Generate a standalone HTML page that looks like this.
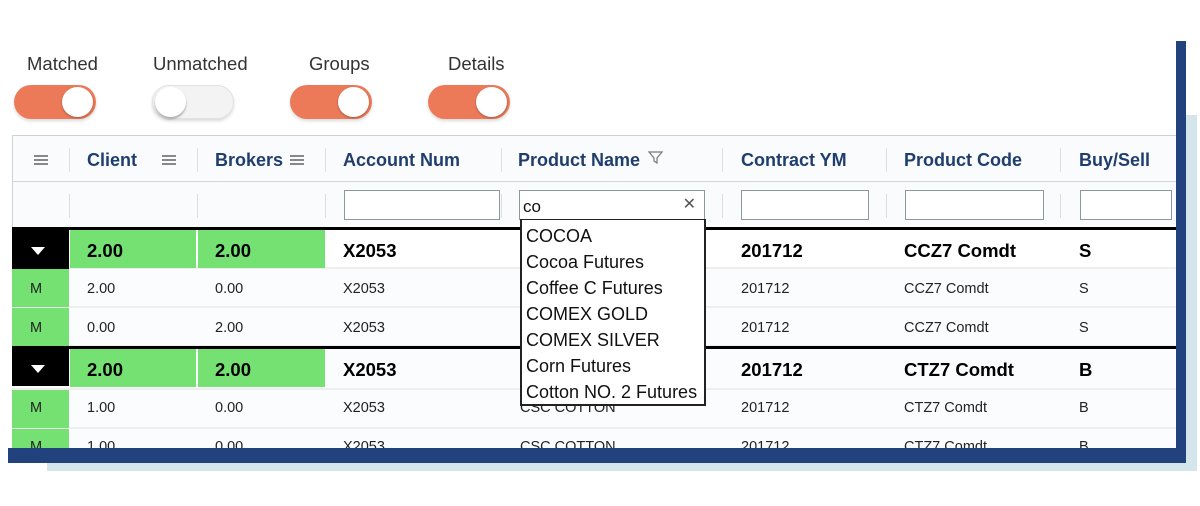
<!DOCTYPE html>
<html><head><meta charset="utf-8"><style>
*{margin:0;padding:0;box-sizing:border-box}
body{width:1200px;height:506px;background:#fff;position:relative;overflow:hidden;font-family:"Liberation Sans",sans-serif}
.a{position:absolute}
.lbl{font-family:"Liberation Sans",sans-serif;font-size:18.5px;color:#333;top:53px}
.tg{top:85px;width:82px;height:34px;border-radius:17px;background:#ec7a58;box-shadow:0 2px 3px rgba(0,0,0,.15)}
.tg .k{position:absolute;right:3px;top:2px;width:31px;height:30px;border-radius:50%;background:#fff;box-shadow:0 1px 2px rgba(0,0,0,.3)}
.tg.off{background:#f3f3f3;border:1px solid #e2e2e2}
.tg.off .k{left:2px;right:auto;top:1px;box-shadow:0 2px 2px rgba(0,0,0,.3)}
.hd{font-size:18px;font-weight:bold;color:#1f3e6e;top:150px}
.sep{width:1px;background:#ddd}
.ham{width:14px;height:10px;border-top:2px solid #888;border-bottom:2px solid #888}
.ham:after{content:"";position:absolute;left:0;right:0;top:2px;border-top:2px solid #888}
.inp{height:30px;top:190px;border:1px solid #8a9a9a;background:#fff}
.row{left:12px;width:1164px;border-bottom:2px solid #eee;background:#fbfcfe}
.c{position:absolute;font-size:14.5px;color:#222}
.b{font-size:18.5px;font-weight:bold;color:#000}
.g{background:#75e173}
.dd div{font-size:18px;color:#111;height:26px;line-height:26px;padding-left:4px}
</style></head><body>
<div class="a" style="left:1186px;top:115px;width:11px;height:356px;background:#d4e5ec"></div>
<div class="a" style="left:47px;top:463px;width:1150px;height:8px;background:#d4e5ec"></div>

<div class="a lbl" style="left:27px">Matched</div>
<div class="a lbl" style="left:153px">Unmatched</div>
<div class="a lbl" style="left:309px">Groups</div>
<div class="a lbl" style="left:448px">Details</div>
<div class="a tg" style="left:14px"><div class="k"></div></div>
<div class="a tg off" style="left:152px"><div class="k"></div></div>
<div class="a tg" style="left:290px"><div class="k"></div></div>
<div class="a tg" style="left:428px"><div class="k"></div></div>

<div class="a" style="left:12px;top:135px;width:1164px;height:315px;border:1px solid #ccd3d6;border-right:none;background:#fafbfc"></div>
<div class="a" style="left:12px;top:181px;width:1164px;height:1px;background:#cfd6d9"></div>
<div class="a ham" style="left:34px;top:155px"></div>
<div class="a ham" style="left:162px;top:155px"></div>
<div class="a ham" style="left:290px;top:155px"></div>
<div class="a hd" style="left:87px">Client</div>
<div class="a hd" style="left:215px">Brokers</div>
<div class="a hd" style="left:343px">Account Num</div>
<div class="a hd" style="left:518px">Product Name</div>
<svg class="a" style="left:648px;top:151px" width="16" height="14"><path d="M1 1H14L9 7V12L6 10V7Z" fill="none" stroke="#777" stroke-width="1.2"/></svg>
<div class="a hd" style="left:741px">Contract YM</div>
<div class="a hd" style="left:904px">Product Code</div>
<div class="a hd" style="left:1079px">Buy/Sell</div>
<div class="a sep" style="left:69px;top:148px;height:24px"></div>
<div class="a sep" style="left:197px;top:148px;height:24px"></div>
<div class="a sep" style="left:325px;top:148px;height:24px"></div>
<div class="a sep" style="left:501px;top:148px;height:24px"></div>
<div class="a sep" style="left:722px;top:148px;height:24px"></div>
<div class="a sep" style="left:886px;top:148px;height:24px"></div>
<div class="a sep" style="left:1060px;top:148px;height:24px"></div>
<div class="a sep" style="left:69px;top:194px;height:24px"></div>
<div class="a sep" style="left:197px;top:194px;height:24px"></div>
<div class="a sep" style="left:325px;top:194px;height:24px"></div>
<div class="a sep" style="left:501px;top:194px;height:24px"></div>
<div class="a sep" style="left:722px;top:194px;height:24px"></div>
<div class="a sep" style="left:886px;top:194px;height:24px"></div>
<div class="a sep" style="left:1060px;top:194px;height:24px"></div>
<div class="a inp" style="left:344px;width:156px"></div>
<div class="a inp" style="left:519px;width:186px;font-size:17px;padding:6px 0 0 3px;color:#111">co<span style="position:absolute;right:8px;top:3px;color:#555;font-size:16px">✕</span></div>
<div class="a inp" style="left:741px;width:128px"></div>
<div class="a inp" style="left:905px;width:139px"></div>
<div class="a inp" style="left:1080px;width:92px"></div>

<div class="a row" style="top:227px;height:42px;border-top:3px solid #000;background:#fff"></div>
<div class="a" style="left:12px;top:229px;width:57px;height:40px;background:#000"></div>
<div class="a" style="left:31px;top:247px;width:0;height:0;border-left:7px solid transparent;border-right:7px solid transparent;border-top:8px solid #fff"></div>
<div class="a g" style="left:70px;top:230px;width:126px;height:38px"></div>
<div class="a g" style="left:198px;top:230px;width:127px;height:38px"></div>
<div class="c b" style="left:87px;top:240px">2.00</div>
<div class="c b" style="left:215px;top:240px">2.00</div>
<div class="c b" style="left:343px;top:240px">X2053</div>
<div class="c b" style="left:741px;top:240px">201712</div>
<div class="c b" style="left:904px;top:240px">CCZ7 Comdt</div>
<div class="c b" style="left:1079px;top:240px">S</div>

<div class="a row" style="top:269px;height:39px"></div>
<div class="a g" style="left:12px;top:269px;width:57px;height:38px"></div>
<div class="c" style="left:30px;top:281px">M</div><div class="c" style="left:87px;top:281px">2.00</div><div class="c" style="left:215px;top:281px">0.00</div><div class="c" style="left:343px;top:281px">X2053</div><div class="c" style="left:741px;top:281px">201712</div><div class="c" style="left:904px;top:281px">CCZ7 Comdt</div><div class="c" style="left:1079px;top:281px">S</div>
<div class="a row" style="top:308px;height:39px"></div>
<div class="a g" style="left:12px;top:308px;width:57px;height:38px"></div>
<div class="c" style="left:30px;top:320px">M</div><div class="c" style="left:87px;top:320px">0.00</div><div class="c" style="left:215px;top:320px">2.00</div><div class="c" style="left:343px;top:320px">X2053</div><div class="c" style="left:741px;top:320px">201712</div><div class="c" style="left:904px;top:320px">CCZ7 Comdt</div><div class="c" style="left:1079px;top:320px">S</div>

<div class="a row" style="top:346px;height:44px;border-top:3px solid #000"></div>
<div class="a" style="left:12px;top:348px;width:57px;height:38px;background:#000"></div>
<div class="a" style="left:31px;top:365px;width:0;height:0;border-left:7px solid transparent;border-right:7px solid transparent;border-top:8px solid #fff"></div>
<div class="a g" style="left:70px;top:349px;width:126px;height:38px"></div>
<div class="a g" style="left:198px;top:349px;width:127px;height:38px"></div>
<div class="c b" style="left:87px;top:359px">2.00</div>
<div class="c b" style="left:215px;top:359px">2.00</div>
<div class="c b" style="left:343px;top:359px">X2053</div>
<div class="c b" style="left:741px;top:359px">201712</div>
<div class="c b" style="left:904px;top:359px">CTZ7 Comdt</div>
<div class="c b" style="left:1079px;top:359px">B</div>

<div class="a row" style="top:390px;height:39px"></div>
<div class="a g" style="left:12px;top:390px;width:57px;height:38px"></div>
<div class="c" style="left:30px;top:400px">M</div><div class="c" style="left:87px;top:400px">1.00</div><div class="c" style="left:215px;top:400px">0.00</div><div class="c" style="left:343px;top:400px">X2053</div><div class="c" style="left:520px;top:400px">CSC COTTON</div><div class="c" style="left:741px;top:400px">201712</div><div class="c" style="left:904px;top:400px">CTZ7 Comdt</div><div class="c" style="left:1079px;top:400px">B</div>
<div class="a row" style="top:429px;height:21px;border:none"></div>
<div class="a g" style="left:12px;top:429px;width:57px;height:21px"></div>
<div class="c" style="left:30px;top:439px">M</div><div class="c" style="left:87px;top:439px">1.00</div><div class="c" style="left:215px;top:439px">0.00</div><div class="c" style="left:343px;top:439px">X2053</div><div class="c" style="left:520px;top:439px">CSC COTTON</div><div class="c" style="left:741px;top:439px">201712</div><div class="c" style="left:904px;top:439px">CTZ7 Comdt</div><div class="c" style="left:1079px;top:439px">B</div>

<div class="a dd" style="left:520px;top:219px;width:186px;height:187px;border:2px solid #222;border-top:1px solid #222;background:#fff;padding-top:3px">
<div>COCOA</div><div>Cocoa Futures</div><div>Coffee C Futures</div><div>COMEX GOLD</div><div>COMEX SILVER</div><div>Corn Futures</div><div>Cotton NO. 2 Futures</div>
</div>

<div class="a" style="left:1176px;top:41px;width:10px;height:422px;background:#21427c"></div>
<div class="a" style="left:8px;top:448px;width:1178px;height:15px;background:#21427c"></div>
</body></html>
